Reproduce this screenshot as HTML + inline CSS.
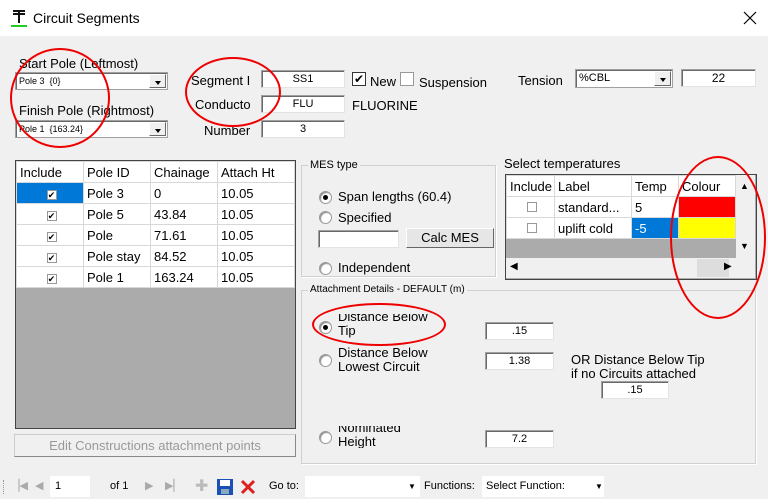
<!DOCTYPE html>
<html><head><meta charset="utf-8"><style>
*{box-sizing:border-box;margin:0;padding:0}
body{width:768px;height:499px;overflow:hidden;background:#f0f0f0;font-family:"Liberation Sans",sans-serif;font-size:13px;color:#000;position:relative}
.a{position:absolute;white-space:nowrap}
.in{position:absolute;background:#fff;border:1px solid #a0a0a0;border-right-color:#e3e3e3;border-bottom-color:#e3e3e3;box-shadow:inset 1px 1px 0 #696969;font-size:11px;text-align:center;line-height:17px}
.cb{position:absolute;background:#fff;border:1px solid #a0a0a0;box-shadow:inset 1px 1px 0 #696969;font-size:9px;line-height:16px;padding-left:3px}
.dd{position:absolute;right:1px;top:1px;bottom:1px;width:17px;background:#f0f0f0;border:1px solid #fff;border-right-color:#696969;border-bottom-color:#696969}
.dd:after{content:"";position:absolute;left:5px;top:6px;border:3px solid transparent;border-top:4px solid #000}
.rad{position:absolute;width:13px;height:13px;border-radius:50%;background:#fff;border:1px solid #999;box-shadow:inset 1px 1px 1px #888}
.rad.on:after{content:"";position:absolute;left:3px;top:3px;width:5px;height:5px;border-radius:50%;background:#000}
.grp{position:absolute;border:1px solid #d0d0d0;box-shadow:1px 1px 0 #fff}
.grp span{position:absolute;top:-7px;left:6px;background:#f0f0f0;padding:0 2px;font-size:11px}
table{border-collapse:collapse;font-size:13px}
td{border:1px solid #d8d8d8;height:21px;padding-left:3px;background:#fff}
.chk{display:inline-block;width:10px;height:10px;border:1px solid #999;background:#fff;font-size:9px;line-height:8px;text-align:center}
.ell{position:absolute;border:2px solid #e00;border-radius:50%}
</style></head><body>
<div class="a" style="left:0;top:0;width:768px;height:36px;background:#fff"></div>
<svg class="a" style="left:9px;top:8px" width="20" height="20"><path d="M4 3h12M4 6h12M10 3v12" stroke="#111" stroke-width="2" fill="none"/><path d="M2 18h16" stroke="#2c2" stroke-width="2"/></svg>
<div class="a" style="left:33px;top:10px;font-size:14px">Circuit Segments</div>
<svg class="a" style="left:743px;top:11px" width="14" height="14"><path d="M1 1L13 13M13 1L1 13" stroke="#000" stroke-width="1.2"/></svg>

<div class="a" style="left:19px;top:56px">Start Pole (Leftmost)</div>
<div class="cb" style="left:15px;top:72px;width:153px;height:18px">Pole 3 &nbsp;{0}<div class="dd"></div></div>
<div class="a" style="left:19px;top:103px">Finish Pole (Rightmost)</div>
<div class="cb" style="left:15px;top:120px;width:153px;height:18px">Pole 1 &nbsp;{163.24}<div class="dd"></div></div>

<div class="a" style="left:191px;top:73px">Segment I</div>
<div class="in" style="left:261px;top:70px;width:84px;height:18px">SS1</div>
<div class="a" style="left:195px;top:97px">Conducto</div>
<div class="in" style="left:261px;top:95px;width:84px;height:18px">FLU</div>
<div class="a" style="left:204px;top:123px">Number</div>
<div class="in" style="left:261px;top:120px;width:84px;height:18px">3</div>
<div class="a" style="left:352px;top:72px;width:14px;height:14px;background:#fff;border:1px solid #333;font-size:12px;line-height:12px;text-align:center">✔</div>
<div class="a" style="left:370px;top:74px">New</div>
<div class="a" style="left:400px;top:72px;width:14px;height:14px;background:#fff;border:1px solid #999"></div>
<div class="a" style="left:419px;top:75px">Suspension</div>
<div class="a" style="left:352px;top:98px">FLUORINE</div>
<div class="a" style="left:518px;top:73px">Tension</div>
<div class="cb" style="left:575px;top:69px;width:98px;height:19px;font-size:11px">%CBL<div class="dd"></div></div>
<div class="in" style="left:681px;top:69px;width:75px;height:18px;font-size:12px">22</div>

<div class="a" style="left:15px;top:160px;width:281px;height:269px;background:#ababab;border:1px solid #444"></div>
<table class="a" style="left:16px;top:161px">
<tr><td style="width:67px;background:#fff">Include</td><td style="width:67px">Pole ID</td><td style="width:67px">Chainage</td><td style="width:77px">Attach Ht</td></tr>
<tr><td style="background:#0078d7;text-align:center"><span class="chk">✔</span></td><td>Pole 3</td><td>0</td><td>10.05</td></tr>
<tr><td style="text-align:center"><span class="chk">✔</span></td><td>Pole 5</td><td>43.84</td><td>10.05</td></tr>
<tr><td style="text-align:center"><span class="chk">✔</span></td><td>Pole</td><td>71.61</td><td>10.05</td></tr>
<tr><td style="text-align:center"><span class="chk">✔</span></td><td>Pole stay</td><td>84.52</td><td>10.05</td></tr>
<tr><td style="text-align:center"><span class="chk">✔</span></td><td>Pole 1</td><td>163.24</td><td>10.05</td></tr>
</table>
<div class="a" style="left:14px;top:434px;width:282px;height:23px;border:1px solid #ccc;border-right-color:#888;border-bottom-color:#888;text-align:center;line-height:21px;color:#999">Edit Constructions attachment points</div>

<div class="grp" style="left:301px;top:165px;width:195px;height:112px"><span>MES type</span></div>
<div class="rad on" style="left:319px;top:191px"></div><div class="a" style="left:338px;top:189px">Span lengths (60.4)</div>
<div class="rad" style="left:319px;top:211px"></div><div class="a" style="left:338px;top:210px">Specified</div>
<div class="in" style="left:318px;top:230px;width:81px;height:18px"></div>
<div class="a" style="left:406px;top:228px;width:88px;height:20px;border:1px solid #fff;border-right-color:#666;border-bottom-color:#666;background:#e6e6e6;text-align:center;line-height:18px">Calc MES</div>
<div class="rad" style="left:319px;top:262px"></div><div class="a" style="left:338px;top:260px">Independent</div>

<div class="a" style="left:504px;top:156px">Select temperatures</div>
<div class="a" style="left:505px;top:174px;width:252px;height:106px;background:#ababab;border:1px solid #444"></div>
<table class="a" style="left:506px;top:175px;font-size:13px">
<tr><td style="width:48px;overflow:hidden">Include</td><td style="width:77px">Label</td><td style="width:47px">Temp</td><td style="width:57px">Colour</td></tr>
<tr><td style="text-align:center"><span class="chk"></span></td><td>standard...</td><td>5</td><td style="background:#f00"></td></tr>
<tr><td style="text-align:center"><span class="chk"></span></td><td>uplift cold</td><td style="background:#0078d7;color:#fff">-5</td><td style="background:#ff0"></td></tr>
</table>
<div class="a" style="left:736px;top:175px;width:19px;height:83px;background:#f0f0f0"></div>
<div class="a" style="left:740px;top:181px;font-size:9px">▲</div>
<div class="a" style="left:740px;top:241px;font-size:9px">▼</div>
<div class="a" style="left:506px;top:258px;width:249px;height:20px;background:#f0f0f0"></div>
<div class="a" style="left:510px;top:261px;font-size:10px">◀</div>
<div class="a" style="left:697px;top:259px;width:32px;height:18px;background:#ddd"></div>
<div class="a" style="left:724px;top:261px;font-size:10px">▶</div>

<div class="grp" style="left:301px;top:290px;width:455px;height:174px"><span style="font-size:10px">Attachment Details - DEFAULT (m)</span></div>
<div class="rad on" style="left:319px;top:321px"></div>
<div class="a" style="left:338px;top:314px;height:28px;overflow:hidden;line-height:14px;padding-top:0"><div style="margin-top:-4px">Distance Below<br>Tip</div></div>
<div class="in" style="left:485px;top:322px;width:69px;height:18px">.15</div>
<div class="rad" style="left:319px;top:354px"></div>
<div class="a" style="left:338px;top:346px;line-height:14px">Distance Below<br>Lowest Circuit</div>
<div class="in" style="left:485px;top:352px;width:69px;height:18px">1.38</div>
<div class="a" style="left:571px;top:353px;line-height:14px">OR Distance Below Tip<br>if no Circuits attached</div>
<div class="in" style="left:601px;top:381px;width:68px;height:18px">.15</div>
<div class="rad" style="left:319px;top:431px"></div>
<div class="a" style="left:338px;top:426px;height:22px;overflow:hidden;line-height:14px"><div style="margin-top:-5px">Nominated<br>Height</div></div>
<div class="in" style="left:485px;top:430px;width:69px;height:18px">7.2</div>

<div class="a" style="left:0;top:474px;width:768px;height:25px;background:#f0f0f0;font-size:11px;line-height:25px">
<div class="a" style="left:3px;top:6px;height:14px;border-left:1px dotted #999"></div>
<div class="a" style="left:11px;color:#aaa">▕◀</div><div class="a" style="left:35px;color:#aaa">◀</div>
<div class="a" style="left:50px;top:2px;width:40px;height:21px;background:#fff;line-height:21px;padding-left:5px">1</div>
<div class="a" style="left:110px">of 1</div>
<div class="a" style="left:145px;color:#aaa">▶</div><div class="a" style="left:165px;color:#aaa">▶▏</div>
<div class="a" style="left:195px;color:#bbb;font-size:16px">✚</div>
<svg class="a" style="left:217px;top:5px" width="16" height="16"><rect x="0" y="0" width="16" height="16" fill="#1a4fb5"/><rect x="3" y="1" width="10" height="6" fill="#fff"/><rect x="4" y="10" width="8" height="5" fill="#8ab"/></svg>
<svg class="a" style="left:240px;top:5px" width="16" height="16"><path d="M2 2L14 14M14 2L2 14" stroke="#e02020" stroke-width="3"/></svg>
<div class="a" style="left:269px">Go to:</div>
<div class="a" style="left:305px;top:2px;width:115px;height:21px;background:#fff"></div>
<div class="a" style="left:408px;font-size:8px">▼</div>
<div class="a" style="left:424px">Functions:</div>
<div class="a" style="left:482px;top:2px;width:122px;height:21px;background:#fff;padding-left:4px;line-height:21px">Select Function:</div>
<div class="a" style="left:595px;font-size:8px">▼</div>
</div>

<div class="ell" style="left:10px;top:48px;width:100px;height:100px"></div>
<div class="ell" style="left:185px;top:57px;width:96px;height:70px"></div>
<div class="ell" style="left:670px;top:156px;width:96px;height:163px"></div>
<div class="ell" style="left:312px;top:303px;width:134px;height:43px"></div>
</body></html>
